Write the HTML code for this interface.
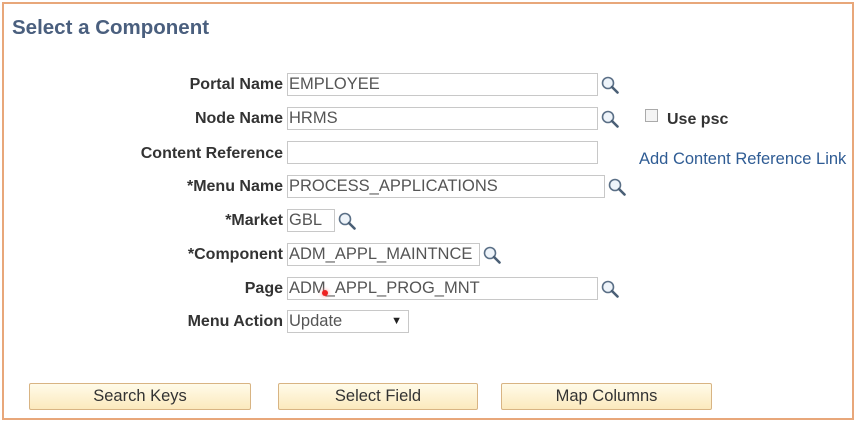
<!DOCTYPE html><html><head><style>
body{margin:0;width:860px;height:424px;background:#fff;position:relative;overflow:hidden;font-family:"Liberation Sans",Arial,sans-serif}
.frame{position:absolute;left:2px;top:2px;width:848px;height:414px;border:2px solid #e8a77a}
.t{position:absolute;left:12px;top:16px;font-size:20.5px;font-weight:bold;color:#4a5f7e}
.l{position:absolute;right:577px;font-size:16px;font-weight:bold;color:#333;white-space:nowrap}
.i{position:absolute;left:287px;height:23px;border:1px solid #c8c8c8;box-sizing:border-box;font-size:16.5px;color:#555;padding-left:1px;line-height:21px;white-space:nowrap;overflow:hidden}
.m{position:absolute;width:18px;height:18px}
.b{position:absolute;top:383px;height:27px;border:1px solid #d8b483;border-radius:2px;background:linear-gradient(#fffbe9,#fbe9bd);box-sizing:border-box;text-align:center;line-height:25px;font-size:16.5px;color:#333}
</style></head><body>
<div class="frame"></div>
<div class="t">Select a Component</div>
<svg width="0" height="0" style="position:absolute"><defs><g id="mg"><circle cx="7" cy="7" r="5.5" fill="#eef4fa" stroke="#5a6f86" stroke-width="1.6"/><line x1="11" y1="11" x2="16.5" y2="16.5" stroke="#4a5f76" stroke-width="2.6" stroke-linecap="round"/></g></defs></svg>

<div class="l" style="top:76px">Portal Name</div><div class="i" style="top:73px;width:311px">EMPLOYEE</div>
<svg class="m" style="left:601px;top:76px"><use href="#mg"/></svg>

<div class="l" style="top:110px">Node Name</div><div class="i" style="top:107px;width:311px">HRMS</div>
<svg class="m" style="left:601px;top:110px"><use href="#mg"/></svg>
<div style="position:absolute;left:645px;top:109px;width:13px;height:13px;border:1px solid #aaa;background:#f4f4f4;box-sizing:border-box"></div>
<div style="position:absolute;left:667px;top:111px;font-size:16px;font-weight:bold;color:#333">Use psc</div>

<div class="l" style="top:145px">Content Reference</div><div class="i" style="top:141px;width:311px"></div>
<div style="position:absolute;left:639px;top:150px;font-size:16.5px;color:#2f5c94;white-space:nowrap">Add Content Reference Link</div>

<div class="l" style="top:178px">*Menu Name</div><div class="i" style="top:175px;width:318px">PROCESS_APPLICATIONS</div>
<svg class="m" style="left:608px;top:178px"><use href="#mg"/></svg>

<div class="l" style="top:212px">*Market</div><div class="i" style="top:209px;width:48px">GBL</div>
<svg class="m" style="left:338px;top:212px"><use href="#mg"/></svg>

<div class="l" style="top:246px">*Component</div><div class="i" style="top:243px;width:193px">ADM_APPL_MAINTNCE</div>
<svg class="m" style="left:483px;top:246px"><use href="#mg"/></svg>

<div class="l" style="top:280px">Page</div><div class="i" style="top:277px;width:311px">ADM_APPL_PROG_MNT</div>
<svg class="m" style="left:601px;top:280px"><use href="#mg"/></svg>
<div style="position:absolute;left:322px;top:290px;width:6px;height:6px;border-radius:50%;background:#e22;box-shadow:0 0 4px #f88"></div>

<div class="l" style="top:313px">Menu Action</div><div class="i" style="top:310px;width:122px">Update<span style="position:absolute;right:6px;font-size:11px;color:#222">▼</span></div>

<div class="b" style="left:29px;width:222px">Search Keys</div>
<div class="b" style="left:278px;width:200px">Select Field</div>
<div class="b" style="left:501px;width:211px">Map Columns</div>
</body></html>
